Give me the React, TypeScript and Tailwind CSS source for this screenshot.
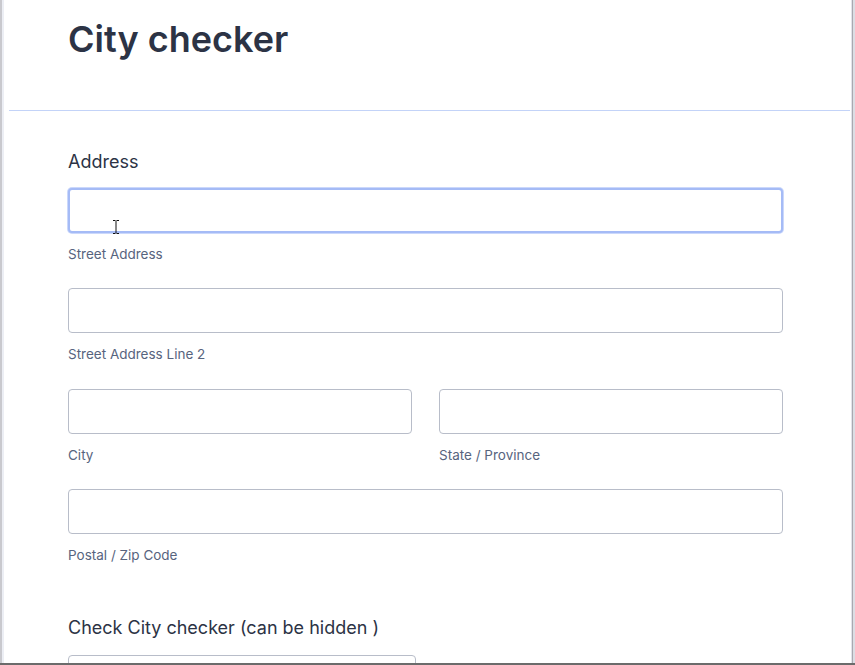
import React from "react";

function Field({ label, focused, className = "" }: { label: string; focused?: boolean; className?: string }) {
  return (
    <div className={"flex shrink-0 flex-col " + className}>
      <div
        className={
          "h-[45px] w-full shrink-0 rounded-[4px] bg-white " +
          (focused
            ? "border-2 border-[#a5bbf6] shadow-[0_0_0_1px_#cbd8fb]"
            : "border border-[#b8bdc9]")
        }
      />
      <div className="mt-[11px] h-[20px] text-[13.5px] leading-[20px] text-[#57647e]">{label}</div>
    </div>
  );
}

export default function App() {
  return (
    <div
      className="relative flex h-[665px] w-[855px] flex-col overflow-hidden bg-white"
      style={{ fontFamily: "Inter, 'Noto Sans', sans-serif" }}
    >
      <div className="flex flex-1 overflow-hidden">
        <div className="flex w-[4px] shrink-0">
          <div className="w-[2px] bg-[#c9c9ce]" />
          <div className="w-[2px] bg-[#eceef4]" />
        </div>
        <div className="block flex-1 overflow-hidden">
          <div className="h-[110px] pl-[64px] pt-[17px]">
            <h1 className="text-[36px] font-semibold leading-[44px] text-[#2c3345]">City checker</h1>
          </div>
          <div className="ml-[5px] mr-[1px] h-[1px] bg-[#c3d3f8]" />
          <div className="flex flex-col pl-[64px] pr-[68px] pt-[38.5px]">
            <div className="shrink-0 text-[18px] font-normal leading-[24px] text-[#2c3345]">Address</div>
            <div className="relative mt-[14px] shrink-0">
              <Field label="Street Address" focused className="mb-[24.5px]" />
              <svg className="absolute left-[44px] top-[32px]" width="8" height="14" viewBox="0 0 8 14">
                <path d="M1 0.5h2.5M4.5 0.5h2.5M4 1v12M1 13.5h2.5M4.5 13.5h2.5" stroke="#111" strokeWidth="1" fill="none" />
              </svg>
            </div>
            <Field label="Street Address Line 2" className="mb-[24.5px]" />
            <div className="mb-[24.5px] grid shrink-0 grid-cols-2 gap-[27px]">
              <Field label="City" />
              <Field label="State / Province" />
            </div>
            <Field label="Postal / Zip Code" />
            <div className="mt-[51px] shrink-0 text-[18px] font-normal leading-[24px] text-[#2c3345]">
              Check City checker (can be hidden )
            </div>
            <div className="mt-[14.5px] h-[45px] w-[348px] shrink-0 rounded-[4px] border border-[#b8bdc9]" />
          </div>
        </div>
        <div className="flex w-[4px] shrink-0">
          <div className="w-[1px] bg-[#e2e3ea]" />
          <div className="w-[1px] bg-[#a9a9b0]" />
          <div className="w-[2px] bg-[#dcdde4]" />
        </div>
      </div>
      <div className="absolute bottom-0 left-0 h-[2px] w-full bg-[#6b6b6b]" />
    </div>
  );
}
